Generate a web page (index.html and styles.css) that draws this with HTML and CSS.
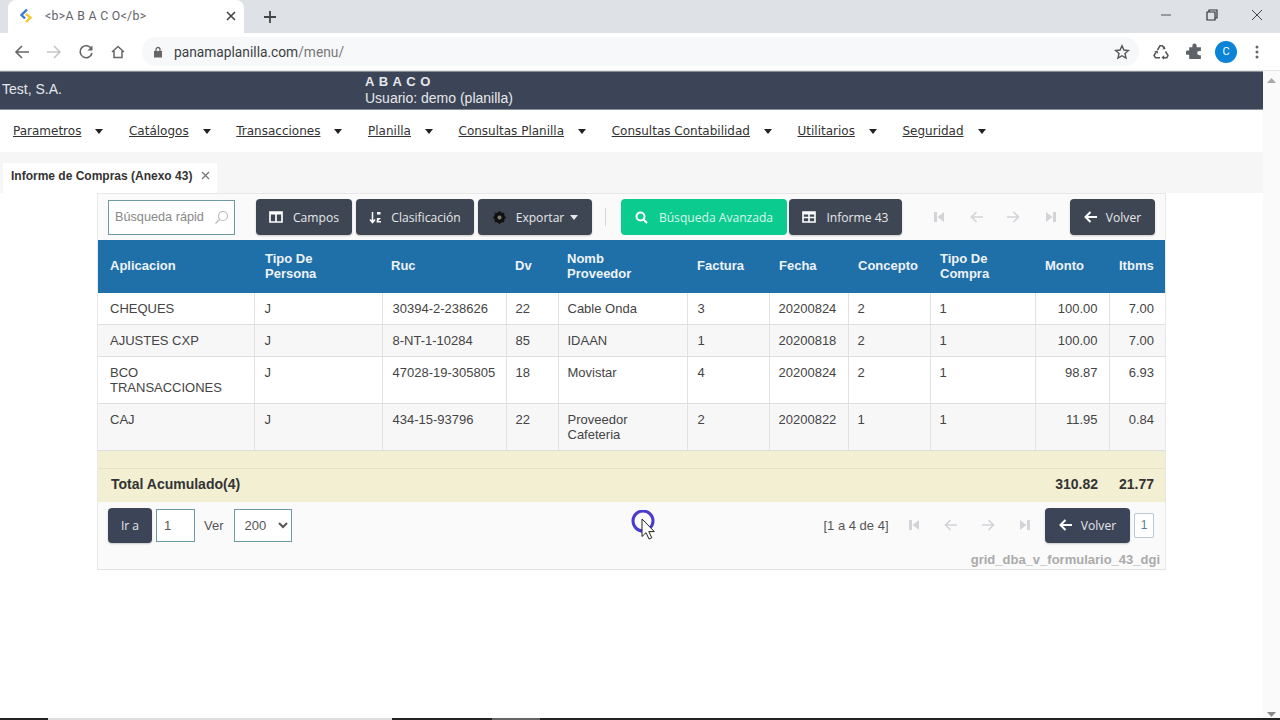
FILE: index.html
```html
<!DOCTYPE html>
<html lang="es">
<head>
<meta charset="utf-8">
<title>A B A C O</title>
<link rel="stylesheet" href="styles.css">
</head>
<body>
<div class="tabstrip">
  <div class="btab">
    <svg class="favicon" width="16" height="16" viewBox="0 0 16 16"><path d="M8 1.500 2.500 7 6 10.500" fill="none" stroke="#3b78d8" stroke-width="2.400"/><path d="M7 6l4.500 3.500L7 14" fill="none" stroke="#f2c935" stroke-width="2.400"/></svg>
    <span class="btab-title">&lt;b&gt;A B A C O&lt;/b&gt;</span>
    <svg class="btab-x" width="10" height="10" viewBox="0 0 10 10"><path d="M1 1l8 8M9 1l-8 8" stroke="#444" stroke-width="1.600"/></svg>
  </div>
  <svg class="plus" width="12" height="12" viewBox="0 0 12 12"><path d="M6 0v12M0 6h12" stroke="#444" stroke-width="1.800"/></svg>
  <div class="winctl">
    <svg width="12" height="12" viewBox="0 0 12 12"><path d="M1 6h10" stroke="#555" stroke-width="1"/></svg>
    <svg width="12" height="12" viewBox="0 0 12 12"><path d="M3 2.500V1h8v8H9.500M1 3h8v8H1z" fill="none" stroke="#333" stroke-width="1.200"/></svg>
    <svg width="12" height="12" viewBox="0 0 12 12"><path d="M1 1l10 10M11 1L1 11" stroke="#444" stroke-width="1"/></svg>
  </div>
</div>
<div class="navbar">
  <svg class="nv" width="16" height="16" viewBox="0 0 16 16"><path d="M15 8H2M8 2 2 8l6 6" fill="none" stroke="#666" stroke-width="1.600"/></svg>
  <svg class="nv" width="16" height="16" viewBox="0 0 16 16"><path d="M1 8h13M8 2l6 6-6 6" fill="none" stroke="#c4c6c9" stroke-width="1.600"/></svg>
  <svg class="nv" width="16" height="16" viewBox="0 0 16 16"><path d="M13.500 5A6 6 0 1 0 14 9" fill="none" stroke="#666" stroke-width="1.600"/><path d="M14.500 1.500v5h-5z" fill="#666"/></svg>
  <svg class="nv" width="16" height="16" viewBox="0 0 16 16"><path d="M2 8l6-5.500L14 8M4 7v6.500h8V7" fill="none" stroke="#666" stroke-width="1.500"/></svg>
  <div class="omni">
    <svg class="lock" width="10" height="12" viewBox="0 0 10 12"><path d="M1 5h8v6.500H1z" fill="#666"/><path d="M3 5V3.500a2 2 0 0 1 4 0V5" fill="none" stroke="#666" stroke-width="1.300"/></svg>
    <span class="url">panamaplanilla.com<span class="url-path">/menu/</span></span>
    <svg class="star" width="16" height="16" viewBox="0 0 16 16"><path d="M8 1.800l1.900 4.200 4.500.5-3.400 3 1 4.500L8 11.700 4 14l1-4.500-3.400-3 4.500-.5z" fill="none" stroke="#555" stroke-width="1.400"/></svg>
  </div>
  <svg class="recycle" width="16" height="16" viewBox="0 0 16 16"><g fill="none" stroke="#555" stroke-width="1.500"><path d="M4.500 6 7 1.800h2.500L11 4"/><path d="M12.500 7.500 15 11.500l-1.200 2.200H11"/><path d="M7 13.700H2.500L1 11.500 2.800 8.500"/></g><g fill="#555"><path d="M9.500 5.500l3-.6-.9-3z"/><path d="M11.200 11.300v4.500l-2.800-2.200z"/><path d="M1.200 7.500l3.300-.9.800 3.100z"/></g></svg>
  <svg class="puzzle" width="17" height="17" viewBox="0 0 16 16"><path d="M6 2.500a2 2 0 0 1 4 0V4h4v3.500h-1.500a2 2 0 0 0 0 4H14V15H3v-4H1.500a2 2 0 0 1 0-4H3V4h3z" fill="#5f6368"/></svg>
  <div class="avatar">C</div>
  <svg class="dots" width="4" height="14" viewBox="0 0 4 14"><circle cx="2" cy="2" r="1.500" fill="#666"/><circle cx="2" cy="7" r="1.500" fill="#666"/><circle cx="2" cy="12" r="1.500" fill="#666"/></svg>
</div>
<div class="viewport">
  <div class="page">
    <header class="apphead">
      <div class="company">Test, S.A.</div>
      <div class="apptitle"><div class="appname">ABACO</div><div>Usuario: demo (planilla)</div></div>
    </header>
    <nav class="menu">
      <div class="mi"><a>Parametros</a><i></i></div>
      <div class="mi"><a>Catálogos</a><i></i></div>
      <div class="mi"><a>Transacciones</a><i></i></div>
      <div class="mi"><a>Planilla</a><i></i></div>
      <div class="mi"><a>Consultas Planilla</a><i></i></div>
      <div class="mi"><a>Consultas Contabilidad</a><i></i></div>
      <div class="mi"><a>Utilitarios</a><i></i></div>
      <div class="mi"><a>Seguridad</a><i></i></div>
    </nav>
    <div class="tabbar">
      <div class="apptab">Informe de Compras (Anexo 43)
        <svg width="9" height="9" viewBox="0 0 9 9"><path d="M1 1l7 7M8 1L1 8" stroke="#777" stroke-width="1.300"/></svg>
      </div>
    </div>
    <section class="panel">
      <div class="toolbar">
        <div class="search"><span>Búsqueda rápid</span>
          <svg width="15" height="15" viewBox="0 0 15 15"><circle cx="9" cy="6" r="4.500" fill="none" stroke="#bbb" stroke-width="1.200"/><path d="M5.500 9.500 1.500 13.500" stroke="#bbb" stroke-width="1.500"/></svg>
        </div>
        <button class="btn b-campos"><svg width="14" height="12" viewBox="0 0 14 12"><path d="M1 1h12v10H1zM7 1v10" fill="none" stroke="#fff" stroke-width="1.700"/><path d="M1 1h12v2.500H1z" fill="#fff"/></svg>Campos</button>
        <button class="btn b-clas"><svg width="13" height="13" viewBox="0 0 13 13"><path d="M3.500 1v10M1 8.500l2.500 3 2.500-3" fill="none" stroke="#fff" stroke-width="1.500"/><path d="M8 1h3.500v2.600H8zM8 7h4l-3 3h3v1.500H7.500" fill="#fff"/></svg>Clasificación</button>
        <button class="btn b-exp"><svg width="15" height="15" viewBox="0 0 15 15"><circle cx="7.500" cy="7.500" r="4" fill="none" stroke="#111" stroke-width="3"/><path d="M7.500 1v13M1 7.500h13M3 3l9 9M12 3l-9 9" stroke="#111" stroke-width="1.500"/><circle cx="7.500" cy="7.500" r="2" fill="#7a7f6a"/></svg>Exportar<i class="caret"></i></button>
        <span class="divider"></span>
        <button class="btn btn-green"><svg width="13" height="13" viewBox="0 0 13 13"><circle cx="5.500" cy="5.500" r="4" fill="none" stroke="#fff" stroke-width="2"/><path d="M8.500 8.500l3.500 3.500" stroke="#fff" stroke-width="2.200"/></svg>Búsqueda Avanzada</button>
        <button class="btn b-inf"><svg width="14" height="12" viewBox="0 0 14 12"><path d="M1 1h12v10H1zM1 6.500h12M7 3v8" fill="none" stroke="#fff" stroke-width="1.600"/><path d="M1 1h12v2.500H1z" fill="#fff"/></svg>Informe 43</button>
        <div class="pager top">
          <svg width="11" height="12" viewBox="0 0 11 12"><path d="M1.500 1v10" stroke="#d2d4d7" stroke-width="3"/><path d="M10 1v10L3.500 6z" fill="#d2d4d7"/></svg>
          <svg width="13" height="12" viewBox="0 0 13 12"><path d="M13 6H2M6.500 1 1.500 6l5 5" fill="none" stroke="#d2d4d7" stroke-width="1.700"/></svg>
          <svg width="13" height="12" viewBox="0 0 13 12"><path d="M0 6h11M6.500 1l5 5-5 5" fill="none" stroke="#d2d4d7" stroke-width="1.700"/></svg>
          <svg width="11" height="12" viewBox="0 0 11 12"><path d="M9.500 1v10" stroke="#d2d4d7" stroke-width="3"/><path d="M1 1v10l6.500-5z" fill="#d2d4d7"/></svg>
        </div>
        <button class="btn b-vol"><svg width="13" height="12" viewBox="0 0 13 12"><path d="M13 6H2M6.500 1 1.500 6l5 5" fill="none" stroke="#fff" stroke-width="2"/></svg>Volver</button>
      </div>
      <table class="grid">
        <colgroup>
          <col class="c1"><col class="c2"><col class="c3"><col class="c4"><col class="c5"><col class="c6"><col class="c7"><col class="c8"><col class="c9"><col class="c10"><col class="c11">
        </colgroup>
        <thead>
          <tr><th>Aplicacion</th><th>Tipo De<br>Persona</th><th>Ruc</th><th>Dv</th><th>Nomb<br>Proveedor</th><th>Factura</th><th>Fecha</th><th>Concepto</th><th>Tipo De<br>Compra</th><th>Monto</th><th>Itbms</th></tr>
        </thead>
        <tbody>
          <tr><td>CHEQUES</td><td>J</td><td>30394-2-238626</td><td>22</td><td>Cable Onda</td><td>3</td><td>20200824</td><td>2</td><td>1</td><td class="num">100.00</td><td class="num">7.00</td></tr>
          <tr><td>AJUSTES CXP</td><td>J</td><td>8-NT-1-10284</td><td>85</td><td>IDAAN</td><td>1</td><td>20200818</td><td>2</td><td>1</td><td class="num">100.00</td><td class="num">7.00</td></tr>
          <tr><td>BCO TRANSACCIONES</td><td>J</td><td>47028-19-305805</td><td>18</td><td>Movistar</td><td>4</td><td>20200824</td><td>2</td><td>1</td><td class="num">98.87</td><td class="num">6.93</td></tr>
          <tr><td>CAJ</td><td>J</td><td>434-15-93796</td><td>22</td><td>Proveedor Cafeteria</td><td>2</td><td>20200822</td><td>1</td><td>1</td><td class="num">11.95</td><td class="num">0.84</td></tr>
        </tbody>
        <tfoot>
          <tr class="blank"><td colspan="11"></td></tr>
          <tr class="total"><td colspan="9">Total Acumulado(4)</td><td class="num">310.82</td><td class="num">21.77</td></tr>
        </tfoot>
      </table>
      <div class="footer">
        <button class="btn btn-ira">Ir a</button>
        <div class="field goto">1</div>
        <span class="ver">Ver</span>
        <select class="field sel"><option>200</option></select>
        <span class="count">[1 a 4 de 4]</span>
        <div class="pager bottom">
          <svg width="11" height="12" viewBox="0 0 11 12"><path d="M1.500 1v10" stroke="#d2d4d7" stroke-width="3"/><path d="M10 1v10L3.500 6z" fill="#d2d4d7"/></svg>
          <svg width="13" height="12" viewBox="0 0 13 12"><path d="M13 6H2M6.500 1 1.500 6l5 5" fill="none" stroke="#d2d4d7" stroke-width="1.700"/></svg>
          <svg width="13" height="12" viewBox="0 0 13 12"><path d="M0 6h11M6.500 1l5 5-5 5" fill="none" stroke="#d2d4d7" stroke-width="1.700"/></svg>
          <svg width="11" height="12" viewBox="0 0 11 12"><path d="M9.500 1v10" stroke="#d2d4d7" stroke-width="3"/><path d="M1 1v10l6.500-5z" fill="#d2d4d7"/></svg>
        </div>
        <button class="btn b-vol2"><svg width="13" height="12" viewBox="0 0 13 12"><path d="M13 6H2M6.500 1 1.500 6l5 5" fill="none" stroke="#fff" stroke-width="2"/></svg>Volver</button>
        <span class="pagenum">1</span>
      </div>
      <div class="gridname">grid_dba_v_formulario_43_dgi</div>
    </section>
  </div>
  <aside class="scrollbar">
    <svg width="9" height="5" viewBox="0 0 9 5"><path d="M4.500 0 9 5H0z" fill="#a9a9a9"/></svg>
    <svg width="9" height="5" viewBox="0 0 9 5"><path d="M0 0h9L4.500 5z" fill="#8a8a8a"/></svg>
  </aside>
</div>
<div class="taskline"><span class="tl-a"></span><span class="tl-b"></span><span class="tl-c"></span><span class="tl-d"></span><span class="tl-e"></span></div>
<svg class="pointer" width="26" height="30" viewBox="0 0 26 30">
  <circle cx="12" cy="11" r="10" fill="none" stroke="#4a3bd0" stroke-width="3"/>
  <path d="M11 9v17.500l4-3.800 3 6.300 2.800-1.200-3-6.200h5.500z" fill="#fff" stroke="#222" stroke-width="1"/>
</svg>
</body>
</html>
```
FILE: styles.css
```css
* { box-sizing: border-box; }
html, body { margin: 0; padding: 0; height: 720px; overflow: hidden; background: #fff; }
body { display: flex; flex-direction: column; font-family: "Liberation Sans", Arial, sans-serif; position: relative; }
svg { display: block; flex: none; }

.tabstrip { height: 33px; flex: none; background: #dee1e6; display: flex; align-items: flex-end; padding-left: 8px; }
.btab { width: 236px; height: 33px; background: #fff; border-radius: 8px 8px 0 0; display: flex; align-items: center; padding: 0 8px 1px 11px; }
.btab-title { font: 12.300px Roboto, sans-serif; color: #5f6368; margin-left: 10px; flex: 1; letter-spacing: .3px; }
.plus { margin: 0 0 10px 20px; }
.winctl { margin-left: auto; display: flex; gap: 33.500px; padding-right: 17px; align-self: flex-start; margin-top: 9px; }

.navbar { height: 38px; flex: none; background: #fff; display: flex; align-items: center; padding-left: 14px; border-bottom: 1px solid #e4e5e8; }
.nv { margin-right: 16px; }
.omni { width: 997px; height: 29px; background: #f7f8f9; border-radius: 14px; display: flex; align-items: center; padding: 0 9px 0 11px; }
.lock { margin-right: 11px; }
.url { font: 13.750px Roboto, sans-serif; color: #3c4043; }
.url-path { color: #777; }
.star { margin-left: auto; }
.recycle { margin-left: 14px; }
.puzzle { margin-left: 17px; }
.avatar { width: 22px; height: 22px; border-radius: 50%; background: #0b84d8; color: #fff; font: 11px/22px Roboto, sans-serif; text-align: center; margin-left: 12px; }
.dots { margin-left: 18px; }

.viewport { flex: 1; min-height: 0; display: flex; }
.page { width: 1263px; flex: none; display: flex; flex-direction: column; }
.scrollbar { flex: 1; background: #fafafa; display: flex; flex-direction: column; justify-content: space-between; align-items: center; padding: 7px 0 3px; }

.apphead { height: 39px; flex: none; background: #3c4557; border-top: 1px solid #8a8f9a; border-bottom: 1px solid #8a8f9a; display: flex; color: #e6e7ea; font-size: 14px; }
.company { width: 365px; padding: 9px 0 0 2px; line-height: 16px; }
.apptitle { padding-top: 3px; line-height: 16px; }
.appname { font-weight: 700; font-size: 13px; letter-spacing: 4.400px; line-height: 14px; margin-bottom: 1px; }

.menu { height: 42px; flex: none; background: #fff; display: flex; align-items: center; padding-left: 13px; gap: 25.600px; }
.mi { display: flex; align-items: center; gap: 14px; font: 12px "DejaVu Sans", sans-serif; color: #333; }
.mi a { text-decoration: underline; }
.mi i { width: 0; height: 0; border: 4px solid transparent; border-top: 5px solid #222; border-bottom: 0; }

.tabbar { height: 41px; flex: none; background: #f6f6f7; padding: 11px 0 0 3px; display: flex; }
.apptab { width: 214px; height: 30px; background: #fff; display: flex; align-items: center; justify-content: space-between; padding: 0 7px 5px 8px; font-weight: 700; font-size: 12px; color: #333; }

.panel { margin-left: 97px; width: 1069px; height: 377px; background: #fafafb; border: 1px solid #e8e8e8; border-bottom-color: #e2e2e2; flex: none; }
.toolbar { height: 46px; display: flex; align-items: center; padding-left: 10px; }
.search { width: 127px; height: 35px; background: #fff; border: 1px solid #6f9aa2; display: flex; align-items: center; justify-content: space-between; padding: 0 5px 0 6px; font-size: 12.700px; color: #888; margin-right: 21px; }
.btn { height: 36px; border: 0; border-radius: 4px; background: #3f4653; color: #e6e7ea; font: 12.100px "Open Sans", sans-serif; display: flex; align-items: center; padding: 0; gap: 9px; justify-content: center; box-shadow: 0 1px 2px rgba(0,0,0,.2); }
.b-campos { width: 96px; margin-right: 4px; gap: 10px; }
.b-clas { width: 118px; margin-right: 4px; }
.b-exp { width: 114px; }
.caret { width: 0; height: 0; border: 4px solid transparent; border-top: 5px solid #e6e7ea; border-bottom: 0; margin-left: -3px; }
.divider { width: 1px; height: 18px; background: #d5d5d5; margin: 0 15px 0 13px; }
.btn-green { width: 166px; margin-right: 2px; background: #0bcb8f; color: #d8f6ec; gap: 11px; box-shadow: none; }
.b-inf { width: 113px; gap: 10px; }
.pager { display: flex; align-items: center; }
.pager.top { gap: 24.500px; margin: 0 14.500px 0 32px; }
.b-vol { width: 85px; gap: 9px; }

.grid { border-collapse: collapse; table-layout: fixed; width: 1067px; font-size: 13px; color: #444; }
.c1 { width: 156px; } .c2 { width: 128px; } .c3 { width: 124px; } .c4 { width: 52px; } .c5 { width: 129px; } .c6 { width: 82px; } .c7 { width: 79px; } .c8 { width: 82px; } .c9 { width: 105px; } .c10 { width: 74px; } .c11 { width: 56px; }
.grid th { height: 53px; background: #1f6fa8; color: #eef3f8; font-weight: 700; text-align: left; padding: 0 10px 2px; line-height: 15px; }
.grid th:first-child { padding-left: 12px; }
.grid th:nth-child(2) { padding-left: 11px; }
.grid th:nth-child(n+3):nth-child(-n+5) { padding-left: 9px; }
.grid tbody td { padding: 8px 10px; line-height: 15px; vertical-align: top; border-bottom: 1px solid #dedede; border-right: 1px solid #e2e2e2; background: #fff; }
.grid tbody td:first-child { padding-left: 12px; }
.grid tbody td:last-child { border-right: 0; }
.grid tbody td:nth-child(n+4):nth-child(-n+5) { padding-left: 9px; }
.grid tbody td:nth-child(n+7):nth-child(-n+9) { padding-left: 9px; }
.grid tbody tr:nth-child(even) td { background: #f7f7f8; }
.grid tbody td.num { text-align: right; padding-right: 11px; }
.grid .blank td { height: 18px; background: #f2efd3; border-bottom: 1px solid #e3e2c8; padding: 0; }
.grid .total td { height: 33px; background: #f2efd3; font-weight: 700; color: #333; padding: 0 10px 2px; font-size: 14px; }
.grid .total td.num { text-align: right; padding-right: 11px; }
.grid .total td:first-child { padding-left: 13px; }

.footer { display: flex; align-items: center; height: 35px; padding: 0 0 0 10px; font-size: 13px; color: #555; margin-top: 6px; }
.btn-ira { width: 44px; height: 35px; background: #3c4557; margin-right: 4px; }
.field { height: 33px; background: #fff; border: 1px solid #6f9aa2; font: 13px "Liberation Sans", sans-serif; color: #555; }
.goto { width: 39px; padding: 8px 0 0 7px; }
.ver { margin: 0 10px 0 9px; }
.sel { width: 58px; padding-left: 6px; border-radius: 0; }
.count { margin-left: auto; margin-right: 20px; }
.pager.bottom { gap: 24.500px; margin-right: 15px; }
.b-vol2 { width: 85px; height: 35px; background: #3c4557; }
.pagenum { width: 20px; height: 25px; margin: 0 11px 0 4px; background: #fff; border: 1px solid #b9c8d6; border-radius: 2px; text-align: center; line-height: 23px; color: #5a7a99; font-size: 12px; }
.gridname { margin-top: 10px; text-align: right; padding-right: 5px; font-weight: 700; font-size: 13px; color: #aaa; line-height: 14px; }

.taskline { position: absolute; left: 0; right: 0; bottom: 0; height: 2px; display: flex; background: #222; }
.tl-a { width: 48px; } .tl-b { width: 344px; background: #ddd; } .tl-c { width: 100px; } .tl-d { width: 48px; background: #666; } .tl-e { flex: 1; }

.pointer { position: absolute; left: 631px; top: 510px; }
```
